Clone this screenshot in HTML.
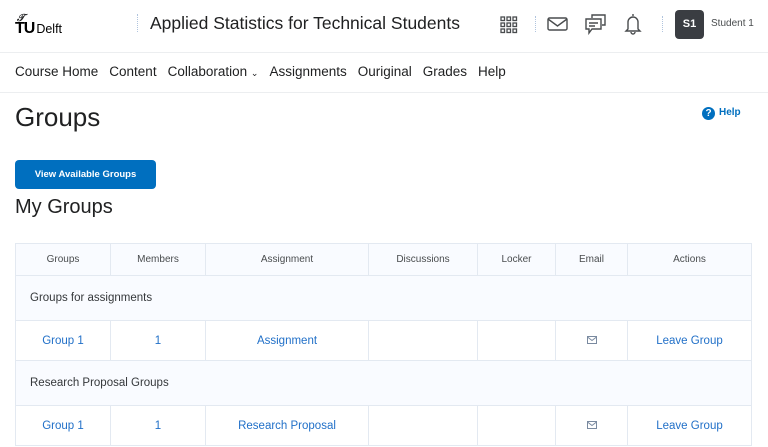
<!DOCTYPE html>
<html><head><style>
*{margin:0;padding:0;box-sizing:border-box}
body{width:768px;height:447px;overflow:hidden;background:#fff;font-family:"Liberation Sans",sans-serif;color:#202122;position:relative}
.a{position:absolute}
.nav span{margin-right:11px}
table{border-collapse:collapse;position:absolute;left:15px;top:243px;width:737px;font-size:11px}
td,th{border:1px solid #e3e9f1;text-align:center;color:#494c4e}
th{font-weight:normal;font-size:10px;height:32px;background:#f9fbff}
.g td{text-align:left;padding-left:14px;background:#f9fbff;height:45px;font-size:11.5px;color:#35383b}
.d td{height:40px;color:#2170c8;font-size:11.5px}
</style></head><body>
<div class="a" style="left:17px;top:13px;font-size:10px;font-weight:bold;font-style:italic">&#x1D4AF;</div>
<div class="a" style="left:15px;top:20px;font-size:16px;font-weight:bold;letter-spacing:-1px;color:#000">TU<span style="font-weight:normal;font-size:12.5px;letter-spacing:0;margin-left:2px">Delft</span></div>
<div class="a" style="left:137px;top:14px;height:18px;border-left:1px dotted #b0c4de"></div>
<div class="a" style="left:150px;top:13px;font-size:17.5px;color:#202122">Applied Statistics for Technical Students</div>
<svg class="a" style="left:500px;top:16px" width="18" height="18" fill="none" stroke="#494c4e" stroke-width="1.3"><g><rect x="1" y="1" width="3.5" height="3.5"/><rect x="7" y="1" width="3.5" height="3.5"/><rect x="13" y="1" width="3.5" height="3.5"/><rect x="1" y="7" width="3.5" height="3.5"/><rect x="7" y="7" width="3.5" height="3.5"/><rect x="13" y="7" width="3.5" height="3.5"/><rect x="1" y="13" width="3.5" height="3.5"/><rect x="7" y="13" width="3.5" height="3.5"/><rect x="13" y="13" width="3.5" height="3.5"/></g></svg>
<div class="a" style="left:535px;top:16px;height:16px;border-left:1px dotted #b0c4de"></div>
<svg class="a" style="left:547px;top:17px" width="21" height="14" fill="none" stroke="#494c4e" stroke-width="1.4"><rect x="1" y="1" width="19" height="12" rx="1.5"/><path d="M1 2l9.5 7L20 2"/></svg>
<svg class="a" style="left:585px;top:14px" width="21" height="21" fill="none" stroke="#494c4e" stroke-width="1.4"><path d="M7 4V1h13v10h-3"/><path d="M1 5h15v10H7l-3 4v-4H1z"/><path d="M4 9h9M4 12h6"/></svg>
<svg class="a" style="left:624px;top:13px" width="18" height="22" fill="none" stroke="#494c4e" stroke-width="1.4"><path d="M9 1v2M4 16V9a5 5 0 0110 0v7l2 2H2z"/><path d="M7 19a2 2 0 004 0"/></svg>
<div class="a" style="left:662px;top:16px;height:16px;border-left:1px dotted #b0c4de"></div>
<div class="a" style="left:675px;top:10px;width:29px;height:29px;background:#3a3d42;border-radius:4px;color:#fff;font-size:11px;font-weight:bold;text-align:center;line-height:29px">S1</div>
<div class="a" style="left:711px;top:18px;font-size:10px;color:#494c4e">Student 1</div>
<div class="a" style="left:0;top:52px;width:768px;border-top:1px solid #eceef0"></div>
<div class="a nav" style="left:15px;top:64px;font-size:13.5px;color:#202122;white-space:nowrap"><span>Course Home</span><span>Content</span><span>Collaboration <small style="font-size:9px">&#8964;</small></span><span>Assignments</span><span>Ouriginal</span><span>Grades</span><span>Help</span></div>
<div class="a" style="left:0;top:92px;width:768px;border-top:1px solid #eceef0"></div>
<div class="a" style="left:15px;top:102px;font-size:26px;color:#202122">Groups</div>
<div class="a" style="left:702px;top:107px;width:13px;height:13px;border-radius:50%;background:#006fbf;color:#fff;font-size:10px;font-weight:bold;text-align:center;line-height:13px">?</div>
<div class="a" style="left:719px;top:107px;font-size:10px;font-weight:bold;color:#006fbf">Help</div>
<div class="a" style="left:15px;top:160px;width:141px;height:29px;background:#006fbf;border-radius:4px;color:#fff;font-size:9.5px;font-weight:bold;text-align:center;line-height:29px">View Available Groups</div>
<div class="a" style="left:15px;top:196px;font-size:20px;color:#202122">My Groups</div>
<table>
<tr><th style="width:95px">Groups</th><th style="width:95px">Members</th><th style="width:163px">Assignment</th><th style="width:109px">Discussions</th><th style="width:78px">Locker</th><th style="width:72px">Email</th><th>Actions</th></tr>
<tr class="g"><td colspan="7">Groups for assignments</td></tr>
<tr class="d"><td>Group 1</td><td>1</td><td>Assignment</td><td></td><td></td><td><svg width="10" height="8" fill="none" stroke="#7a8aa0" stroke-width="1"><rect x=".5" y=".5" width="9" height="7"/><path d="M.5 1l4.5 3.5L9.5 1"/></svg></td><td>Leave Group</td></tr>
<tr class="g"><td colspan="7">Research Proposal Groups</td></tr>
<tr class="d"><td>Group 1</td><td>1</td><td>Research Proposal</td><td></td><td></td><td><svg width="10" height="8" fill="none" stroke="#7a8aa0" stroke-width="1"><rect x=".5" y=".5" width="9" height="7"/><path d="M.5 1l4.5 3.5L9.5 1"/></svg></td><td>Leave Group</td></tr>
</table>
</body></html>
